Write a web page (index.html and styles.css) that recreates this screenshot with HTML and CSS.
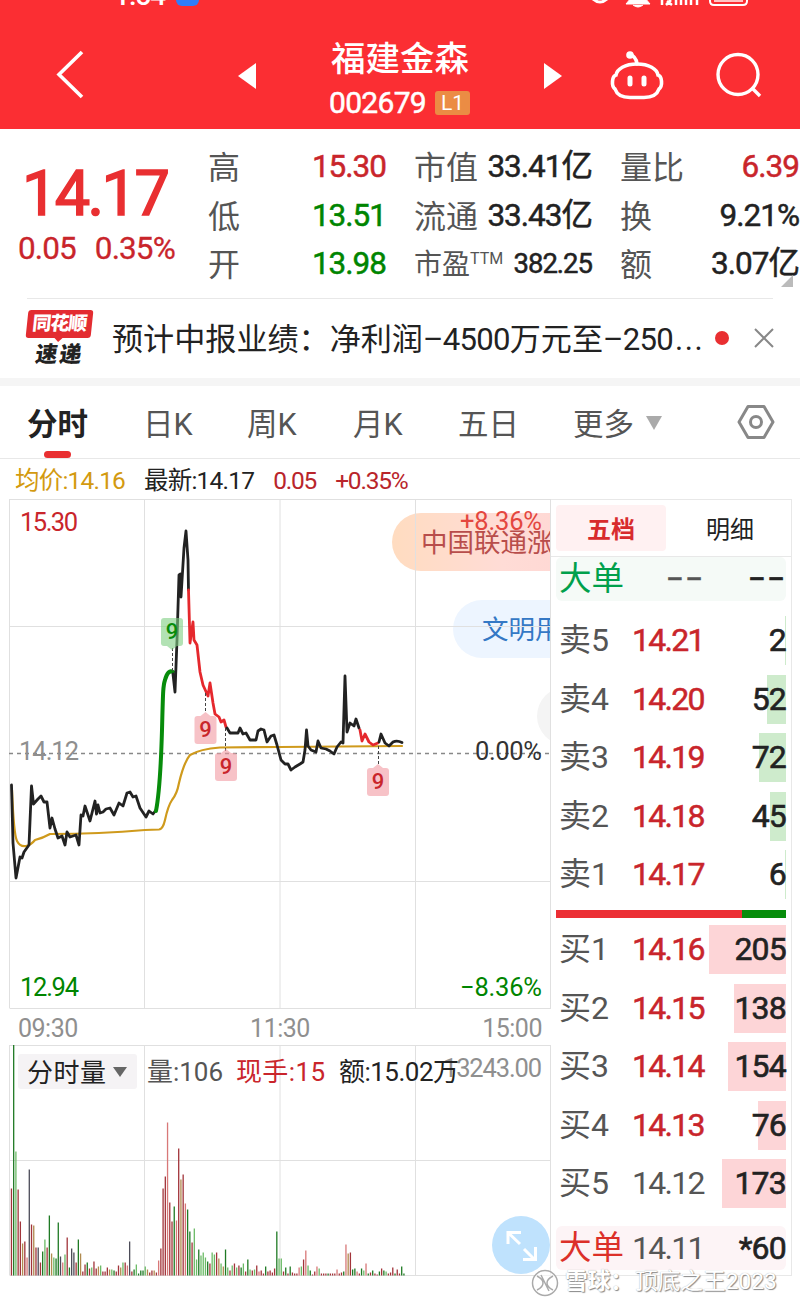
FILE: index.html
```
<!DOCTYPE html>
<html lang="zh-CN">
<head>
    <meta charset="UTF-8">
    <meta name="viewport" content="width=device-width, initial-scale=1.0">
    <title>福建金森 002679</title>
    <link rel="stylesheet" href="styles.css">
</head>
<body>

<header class="header">
    <div class="status-bar">
        <span class="status-time">1:54</span>
        <span class="status-app"></span>
        <svg class="status-icons" width="160" height="8" viewBox="590 0 160 8" fill="none" stroke="#fff" stroke-width="2">
            <path d="M591-3Q600 7 609-3" stroke-width="3"/>
            <path d="M626 4h24l-5-6h-14zM633 5q5 4 10 0" fill="#fff" stroke-width="1"/>
            <path d="M662 0v5M667 1l5 4M671 0l-5 5M676 0v5M681 0v5M686 0v5M691 0v5M697 0v5" stroke-width="2.5"/>
            <path d="M710-4v5q0 4 4 4h29q4 0 4-4v-5"/>
            <path d="M714 0h29" stroke="#ffc4c4" stroke-width="4"/>
        </svg>
    </div>
    <div class="title-bar">
        <svg class="back" width="30" height="50" viewBox="0 0 30 50" fill="none" stroke="#fff" stroke-width="3.6"><path d="M26 3L3 25.500L26 48"/></svg>
        <svg class="prev" width="19" height="26" viewBox="0 0 19 26"><path d="M0 13L18 0V26Z" fill="#fff"/></svg>
        <div class="stock">
            <h1>福建金森</h1>
            <div class="stock-code"><span>002679</span><em>L1</em></div>
        </div>
        <svg class="next" width="19" height="26" viewBox="0 0 19 26"><path d="M18 13L0 0V26Z" fill="#fff"/></svg>
        <svg class="robot" width="54" height="50" viewBox="0 0 54 50" fill="none" stroke="#fff" stroke-width="3.600" stroke-linecap="round">
            <path d="M27 13Q26 5 20 4"/>
            <circle cx="20" cy="4" r="2" fill="#fff"/>
            <path d="M27 13C15 13 7 18 6 24C2 25 1 35 5 38C7 44 13 46.500 20 46.500H34C41 46.500 47 44 49 38C53 35 52 25 48 24C47 18 39 13 27 13Z"/>
            <path d="M20 27v6M34 27v6" stroke-width="5"/>
        </svg>
        <svg class="search" width="48" height="48" viewBox="0 0 48 48" fill="none" stroke="#fff" stroke-width="3.400"><circle cx="23" cy="22.500" r="20"/><path d="M37 36L45 44"/></svg>
    </div>
</header>

<section class="quote">
    <div class="quote-price">
        <strong>14.17</strong>
        <div><span>0.05</span><span>0.35%</span></div>
    </div>
    <dl class="quote-col">
        <div><dt>高</dt><dd class="up">15.30</dd></div>
        <div><dt>低</dt><dd class="down">13.51</dd></div>
        <div><dt>开</dt><dd class="down">13.98</dd></div>
    </dl>
    <dl class="quote-col">
        <div><dt>市值</dt><dd>33.41亿</dd></div>
        <div><dt>流通</dt><dd>33.43亿</dd></div>
        <div class="pe"><dt>市盈<sup>TTM</sup></dt><dd>382.25</dd></div>
    </dl>
    <dl class="quote-col">
        <div><dt>量比</dt><dd class="up">6.39</dd></div>
        <div><dt>换</dt><dd>9.21%</dd></div>
        <div><dt>额</dt><dd>3.07亿</dd></div>
    </dl>
    <i class="expand-corner"></i>
</section>

<section class="news">
    <div class="news-logo">
        <b>同花顺</b>
        <i>速递</i>
    </div>
    <p>预计中报业绩：净利润<span>–4500</span>万元至<span>–250</span><span class="more">...</span></p>
    <span class="news-dot"></span>
    <svg width="20" height="20" viewBox="0 0 20 20" stroke="#888" stroke-width="2"><path d="M1 1L19 19M19 1L1 19"/></svg>
</section>

<nav class="tabs">
    <a class="active">分时</a>
    <a>日K</a>
    <a>周K</a>
    <a>月K</a>
    <a>五日</a>
    <a>更多<i class="caret"></i></a>
    <svg width="38" height="36" viewBox="0 0 38 36" fill="none" stroke="#888" stroke-width="3" stroke-linejoin="round"><path d="M11 2.500H27L36 18L27 33.500H11L2 18Z"/><circle cx="19" cy="18" r="5.500"/></svg>
</nav>

<div class="legend">
    <span class="avg">均价:14.16</span>
    <span>最新:14.17</span>
    <span class="chg">0.05</span>
    <span class="chg">+0.35%</span>
</div>

<main class="board">
    <div class="charts">
        <div class="bubbles">
            <span class="bubble hot">中国联通涨</span>
            <span class="bubble cool">文明用</span>
            <span class="bubble plain"></span>
        </div>

        <!-- intraday price -->
        <svg class="price-chart" width="551" height="511" viewBox="0 499 551 511">
            <path class="grid" d="M9.500 499.500H551M9.500 626.500H551M9.500 881.500H551M9.500 1008.500H551M9.500 499V1008M144.500 499V1008M280 499V1008M415.500 499V1008M550.500 499V1008"/>
            <path d="M9 753.500H551" stroke="#888" stroke-width="1.500" stroke-dasharray="4 4"/>
            <g class="axis">
                <text x="20" y="531" textLength="58" fill="#c9252b">15.30</text>
                <text x="19" y="760" textLength="60" fill="#8f8f8f">14.12</text>
                <text x="20" y="996" textLength="59" fill="#008500">12.94</text>
                <text x="460" y="530" textLength="82" fill="#e4473f">+8.36%</text>
                <text x="475" y="760" textLength="67" fill="#333">0.00%</text>
                <text x="460" y="996" textLength="82" fill="#008500">−8.36%</text>
            </g>
            <path class="line avg-line" stroke="#cf9a1c" d="M12 790C13 815 14 835 17 841Q20 847 26 846Q31 845 35 840Q43 838 50 834Q100 834 145 830L159 829.500Q163 829 165 820Q168 806 172 800Q177 794 179 783Q184 762 190 755Q200 749 220 747.500L280 747L402 746"/>
            <g class="line">
                <path stroke="#222" d="M11.500 785L13 843L16 878L20 857L22 858L24 852L29 845L31.500 786L33.500 804L38 799L41 796L44 802L47 802L50 828L52 818L55 829L58 838L62 836L65 845L67 832L70 837L76 835L79 845L81 815L83 816L85 806L90 821L95 801L96.500 814L98 805L100 813L103 812L106 809L110 808L114 815L119 803L123 806L127 793L130 792L133 797L136 796L140 808L146 817L149 811L153 814L156 810"/>
                <path stroke="#078c0b" stroke-width="4" d="M156 811C160 790 161 765 162 730C163 692 163 686 165 680Q168 669 173 672"/>
                <path stroke="#222" d="M173 674L175 692L177 640L179 575L180.500 574L181 597L184 548L186 531L188 560L188.500 590"/>
                <path stroke="#e5282d" d="M188.500 590L190 643L193 622L194 640L197 645L200 672L203 685L208 696L210 683L213 703L215 714L219 717L221 722L224 720L226 727"/>
                <path stroke="#222" d="M227 728L230 733L238 733L240 728L243 734L246 733L250 740L256 740L258 731L261 729L264 730L267 742L271 736L274 735L277 745L281 760L285 764L288 764L291 770L295 767L300 764L303 762L305 750L306.500 730L308 746L311 750L316 752L318 741L321 748L326 749L330 751L334 754L337 747L341 742L343 743L345 676L347 732L350 723L354 726L356 719L359 728"/>
                <path stroke="#e5282d" d="M360 730L362 741L365 734L369 742L373 745L378 743"/>
                <path stroke="#222" d="M379 742L381 734L385 743L389 746L393 742Q397 740 402 742.500"/>
            </g>
            <path stroke="#444" stroke-dasharray="3 2" d="M172.500 648V672M205.500 693V713M225.500 728V752M378.500 746V765"/>
            <g id="flags"></g>
        </svg>

        <div class="times"><span>09:30</span><span>11:30</span><span>15:00</span></div>

        <!-- volume -->
        <svg class="volume-chart" width="551" height="231" viewBox="0 1045 551 231">
            <path class="grid" d="M9.500 1045.500H551M9.500 1160.500H551M9.500 1275.500H551M9.500 1045V1275M144.500 1045V1275M280 1045V1275M415.500 1045V1275M550.500 1045V1275"/>
            <g id="bars"></g>
            <rect x="18" y="1054" width="119" height="35" rx="3" fill="#f5f3f5"/>
            <path d="M113 1067H127L120 1077Z" fill="#666"/>
            <g class="vol-text">
                <text x="443" y="1077" textLength="99" class="axis" fill="#8f8f8f">13243.00</text>
                <text x="27" y="1082" textLength="79" fill="#222">分时量</text>
                <text x="147" y="1081" textLength="76" fill="#555">量:106</text>
                <text x="236" y="1081" textLength="89" fill="#c9252b">现手:15</text>
                <text x="339" y="1081" textLength="120" fill="#222">额:15.02万</text>
            </g>
        </svg>
        <button class="fullscreen">
            <svg width="58" height="58" viewBox="0 0 58 58" fill="none" stroke="#fff" stroke-width="3"><path d="M16 28V16.500H29M16 16.500L28 28M32 33L43 44M31 43.500H43.500V31"/></svg>
        </button>
    </div>

    <aside class="book">
        <div class="book-tabs"><a class="active">五档</a><a>明细</a></div>
        <div class="big sell"><span>大单</span><span class="dash">−−</span><b class="dash">−−</b></div>
        <div class="levels" id="asks"></div>
        <div class="ratio"><i></i></div>
        <div class="levels" id="bids"></div>
        <div class="big buy"><span>大单</span><span class="price">14.11</span><b>*60</b></div>
    </aside>
</main>

<div class="watermark">
    <svg width="28" height="28" viewBox="0 0 28 28" fill="none" stroke="#aaa" stroke-width="1.500"><circle cx="14" cy="14" r="12.500" fill="#fff" fill-opacity=".6"/><path d="M6 7Q12 10 12 14Q12 18 6 21M22 7Q16 10 16 14Q16 18 22 21M10 6L18 22"/></svg>
    <b>雪球：</b><span>顶底之王2023</span>
</div>

<script>
    const SVG_NS = 'http://www.w3.org/2000/svg';

    function add(parent, tag, attrs, text) {
        const el = document.createElementNS(SVG_NS, tag);
        for (const key in attrs) el.setAttribute(key, attrs[key]);
        if (text) el.textContent = text;
        parent.appendChild(el);
    }

    // Turn markers: x, top, pointing down (green) or up (red)
    const flags = document.getElementById('flags');
    [[161, 618, 'g'], [194.5, 716, 'r'], [215, 753, 'r'], [367, 768, 'r']].forEach(([x, y, dir]) => {
        const tip = dir === 'g' ? `M${x + 6} ${y + 28}l5 4l5-4z` : `M${x + 6} ${y}l5-4l5 4z`;
        const fill = dir === 'g' ? '#7fce82' : '#f29aa2';
        add(flags, 'path', { d: tip, fill: fill, 'fill-opacity': .6 });
        add(flags, 'rect', { x: x, y: y, width: 22, height: 28, rx: 3, fill: fill, 'fill-opacity': .6 });
        add(flags, 'text', { x: x + 11, y: y + 21, class: 'flag-text', fill: dir === 'g' ? '#078c0b' : '#c9252b' }, '9');
    });

    // Volume per minute pair, colour letter + bar height
    const volume = `r87 g231 G124 r86 r54 o32 r34 p18 k106 r51 o50 r28 k28 r13 g24 G36 r28 g60 o22 G18 g17 g53
        k19 p13 G21 r38 g8 k27 k23 r13 g36 o22 r4 r11 g13 r7 G8 r14 r7 o9 G10 r4 r4 r8 o6 G6 g5 r4 r10 o8 G13 r13
        p10 k34 r4 g6 G11 g2 g5 g5 G9 o6 r3 r5 o5 r3 p15 r27 r87 r99 p153 r73 r54 g69 p55 r127 o96 r101 p72 g66
        g44 r33 G47 G16 g26 G20 G23 G18 g14 r12 G23 G21 r23 o17 G12 o9 g26 G8 r5 G10 r12 G8 r10 g8 G12 r4 g16
        G6 r5 G6 r10 p4 r5 r2 g9 r4 r5 r3 r7 g44 G17 G17 r4 g8 r2 g9 r3 r2 r2 p8 G9 r16 p25 G10 g5 r1 r4 p9 G7
        r2 r2 r2 g2 r2 r2 r2 p6 r2 r3 g4 p31 o22 r23 g6 g7 p4 r2 g7 G5 p12 g2 r3 g5 r2 r1 g4 r7 g5 G4 r2 r3
        r8 g2 r6 r2 g9 g2`.trim().split(/\s+/);
    const tones = { r: '#a2343a', p: '#d87878', g: '#1f7a24', G: '#6bbb66', o: '#b08a4e', k: '#4c4c58' };
    const bars = document.getElementById('bars');
    volume.forEach((v, i) => {
        const h = Number(v.slice(1));
        add(bars, 'rect', { x: 10.8 + i * 2.23, y: 1275.5 - h, width: 1.3, height: h, fill: tones[v[0]] });
    });

    // Order book: name, price, lots, bar width
    function fillLevels(id, rows) {
        document.getElementById(id).innerHTML = rows.map(([name, price, lots, width]) => `
            <div class="level">
                <span>${name}</span><span class="price">${price}</span>
                <b>${lots}</b><i style="width:${width}px"></i>
            </div>`).join('');
    }
    fillLevels('asks', [
        ['卖5', '14.21', 2, 1], ['卖4', '14.20', 52, 19], ['卖3', '14.19', 72, 27],
        ['卖2', '14.18', 45, 16], ['卖1', '14.17', 6, 1]
    ]);
    fillLevels('bids', [
        ['买1', '14.16', 205, 77], ['买2', '14.15', 138, 52], ['买3', '14.14', 154, 58],
        ['买4', '14.13', 76, 28], ['买5', '14.12', 173, 64]
    ]);
</script>

</body>
</html>
```
FILE: styles.css
```
* {
    margin: 0;
    padding: 0;
    box-sizing: border-box;
}

body {
    width: 800px;
    height: 1307px;
    overflow: hidden;
    position: relative;
    font-family: Roboto, "Noto Sans CJK SC", sans-serif;
    background: #fff;
    color: #222;
}

svg {
    display: block;
    flex: none;
}

i, em {
    font-style: normal;
}

/* Header */
.header {
    height: 129px;
    background: #fb2e33;
    color: #fff;
    overflow: hidden;
}

.status-bar {
    height: 8px;
    display: flex;
    align-items: flex-end;
    padding-left: 114px;
    overflow: hidden;
}

.status-time {
    width: 62px;
    font-size: 28px;
    font-weight: 500;
    line-height: 24px;
    letter-spacing: -1px;
}

.status-app {
    width: 23px;
    height: 30px;
    margin-bottom: 2px;
    border-radius: 6px;
    background: #2f7dfb;
}

.status-icons {
    margin-left: 391px;
}

.title-bar {
    height: 121px;
    display: flex;
    align-items: center;
    padding: 14px 0 0 56px;
}

.back {
    margin-top: -4px;
}

.prev {
    margin-left: 152px;
}

.stock {
    width: 143px;
    margin: 6px 0 0 71px;
}

.stock h1 {
    font-size: 34.5px;
    line-height: 44px;
    font-weight: 500;
    padding-left: 3px;
}

.stock-code {
    display: flex;
    align-items: center;
    height: 40px;
    padding-top: 4px;
    gap: 8px;
    padding-left: 1px;
}

.stock-code span {
    width: 98px;
    font-size: 30px;
    letter-spacing: -.7px;
    -webkit-text-stroke: .5px;
}

.stock-code em {
    width: 35px;
    height: 24px;
    border-radius: 3px;
    background: #eb8c44;
    font-size: 21px;
    line-height: 25px;
    text-align: center;
}

.next {
    margin-left: 73px;
}

.robot {
    margin-left: 47px;
}

.search {
    margin-left: 51px;
}

/* Quote summary */
.quote {
    position: relative;
    height: 169px;
    display: flex;
    padding-top: 14px;
}

.quote-price {
    width: 208px;
    padding-top: 16px;
    color: #c9252b;
}

.quote-price strong {
    display: block;
    padding-left: 22px;
    font-size: 63px;
    line-height: 70px;
    font-weight: 400;
    letter-spacing: -2.6px;
    color: #e92f31;
    -webkit-text-stroke: 1.6px;
}

.quote-price div {
    display: flex;
    gap: 19px;
    padding: 0 0 0 18px;
    font-size: 31.5px;
    line-height: 40px;
    letter-spacing: -.9px;
    -webkit-text-stroke: .3px;
}

.quote-col {
    width: 178px;
    margin-right: 28px;
}

.quote-col:last-of-type {
    width: 179px;
    margin: 0;
}

.quote-col div {
    display: flex;
    justify-content: space-between;
    align-items: center;
    height: 48.5px;
    white-space: nowrap;
}

.quote-col dt {
    margin-top: -4px;
    font-size: 32px;
    color: #555;
}

.quote-col dd {
    font-size: 31.5px;
    line-height: 36px;
    letter-spacing: -1px;
    -webkit-text-stroke: .5px;
}

.quote-col .pe dt {
    font-size: 28px;
}

.quote-col .pe dd {
    font-size: 27.5px;
}

.pe sup {
    font-size: 16px;
    line-height: 0;
    vertical-align: 10px;
}

.up {
    color: #c9252b;
}

.down {
    color: #008500;
}

.expand-corner {
    position: absolute;
    right: 7px;
    bottom: 11px;
    border-left: 12px solid transparent;
    border-bottom: 12px solid #bbb;
}

/* News strip */
.news {
    height: 88px;
    display: flex;
    align-items: center;
    position: relative;
    padding: 0 26px 0 27px;
    border-bottom: 8px solid #f5f5f5;
}

.news::before {
    content: "";
    position: absolute;
    left: 27px;
    right: 27px;
    top: 0;
    height: 1px;
    background: #e8e8e8;
}

.news-logo {
    width: 65px;
    height: 56px;
    margin-right: 20px;
    text-align: center;
    font-weight: 900;
}

.news-logo b {
    display: block;
    height: 28px;
    font-size: 19px;
    line-height: 27px;
    letter-spacing: -1px;
    font-weight: 900;
    color: #fff;
    background: #e32c31;
    border-radius: 3px;
    transform: skewX(-6deg);
}

.news-logo b::after {
    content: "";
    position: absolute;
    left: 28px;
    top: 27px;
    border: 5px solid transparent;
    border-top-color: #e32c31;
}

.news-logo i {
    display: block;
    font-size: 22px;
    line-height: 33px;
    letter-spacing: 2px;
    transform: skewX(-8deg);
}

.news p {
    width: 592px;
    padding-top: 4px;
    font-size: 31.1px;
    line-height: 40px;
    white-space: nowrap;
}

.news p span {
    letter-spacing: -.7px;
}

.news p .more {
    letter-spacing: 1.5px;
    padding-left: 2px;
}

.news-dot {
    width: 14px;
    height: 14px;
    margin: 0 25px 0 11px;
    border-radius: 50%;
    background: #e92f31;
    flex: none;
}

/* Period tabs */
.tabs {
    height: 73px;
    display: grid;
    grid-template-columns: 116px 104px 106px 105px 115px 164px 38px;
    align-items: center;
    padding-left: 27px;
    border-bottom: 1px solid #e8e8e8;
    font-size: 30.5px;
    color: #555;
}

.tabs a {
    position: relative;
    line-height: 77px;
    height: 72px;
}

.tabs .active {
    color: #222;
    font-weight: 700;
}

.tabs .active::after {
    content: "";
    position: absolute;
    left: 17px;
    bottom: 0;
    width: 27px;
    height: 7px;
    border-radius: 4px;
    background: #e92f31;
}

.caret {
    display: inline-block;
    margin-left: 12px;
    vertical-align: 5px;
    border: 8.5px solid transparent;
    border-top: 14px solid #aaa;
    border-bottom: 0;
}

.legend {
    height: 40px;
    display: flex;
    gap: 19px;
    padding-left: 15px;
    font-size: 24.5px;
    line-height: 43px;
    letter-spacing: -.8px;
}

.legend .avg {
    color: #d39a10;
}

.legend .chg {
    color: #b9252b;
    letter-spacing: -1.2px;
}

/* Charts */
.board {
    display: flex;
    height: 777px;
}

.charts {
    position: relative;
    width: 551px;
}

.grid {
    fill: none;
    stroke: #e0e0e0;
}

.price-chart {
    position: relative;
}

.line {
    fill: none;
    stroke-width: 2.8;
    stroke-linejoin: round;
    stroke-linecap: round;
}

.avg-line {
    stroke-width: 2.2;
}

.axis {
    font-size: 25.5px;
    -webkit-text-stroke: .3px;
}

.vol-text {
    font-size: 26px;
}

.flag-text {
    font-size: 22px;
    font-weight: 500;
    text-anchor: middle;
}

.bubbles {
    position: absolute;
    inset: 0;
    overflow: hidden;
}

.bubble {
    position: absolute;
    height: 58px;
    border-radius: 29px;
    padding-left: 29px;
    font-size: 26.5px;
    line-height: 60px;
    white-space: nowrap;
}

.bubble.hot {
    left: 392px;
    top: 14px;
    width: 220px;
    background: linear-gradient(90deg, #ffdcc0, #ffdcd6 50%, #ffd5d3);
    color: #b84e4b;
}

.bubble.cool {
    left: 453px;
    top: 101px;
    width: 180px;
    background: #edf5ff;
    color: #3478c5;
}

.bubble.plain {
    left: 537px;
    top: 188px;
    width: 100px;
    background: #f4f4f4;
}

.times {
    display: flex;
    justify-content: space-between;
    height: 35px;
    padding: 0 9px 0 18px;
    font-size: 25px;
    line-height: 37px;
    letter-spacing: -.5px;
    color: #8f8f8f;
}

.fullscreen {
    position: absolute;
    left: 492px;
    top: 717px;
    width: 58px;
    height: 58px;
    border: none;
    border-radius: 50%;
    background: #bfe2fd;
}

/* Order book */
.book {
    width: 241px;
    padding: 0 5px;
    border: 1px solid #e8e8e8;
    border-left: none;
}

.book-tabs {
    display: flex;
    height: 57px;
    margin: 0 -5px;
    padding: 5px;
    border-bottom: 1px solid #e8e8e8;
    font-size: 24px;
    line-height: 50px;
    text-align: center;
}

.book-tabs a {
    flex: 1;
    padding-left: 8px;
}

.book-tabs .active {
    flex: none;
    width: 110px;
    padding: 0;
    border-radius: 4px;
    background: #fff1f2;
    color: #d82b2d;
    font-weight: 700;
}

.level,
.big {
    display: grid;
    grid-template-columns: 73px 80px 1fr;
    align-items: center;
    position: relative;
    height: 49px;
    padding-left: 3px;
    font-size: 32px;
    line-height: 47px;
    color: #555;
}

.levels {
    display: grid;
    row-gap: 9.5px;
}

.level b,
.big b {
    position: relative;
    z-index: 1;
    color: #222;
    font-weight: 400;
    letter-spacing: -.8px;
    text-align: right;
    -webkit-text-stroke: .6px;
}

.level i {
    position: absolute;
    right: 0;
    top: 0;
    height: 49px;
}

.price {
    letter-spacing: -1.7px;
}

.level .price {
    color: #c9252b;
    -webkit-text-stroke: .5px;
}

#bids .level:last-child .price {
    color: #555;
    -webkit-text-stroke: 0;
}

#asks i {
    background: #ceebcc;
}

#bids i {
    background: #fdd5d7;
}

.big {
    height: 44px;
    border-radius: 6px;
    line-height: 44px;
}

.big > :first-child {
    font-size: 32.5px;
}

.big .dash {
    letter-spacing: 1px;
    text-align: right;
}

.big.sell {
    margin-bottom: 15px;
    background: #f5faf7;
}

.sell > :first-child {
    color: #00a04c;
}

.sell span.dash {
    padding-right: 8px;
    -webkit-text-stroke: .5px;
}

.big.buy {
    margin-top: 18px;
    background: #fdf4f6;
}

.buy > :first-child {
    color: #dc3029;
}

.ratio {
    height: 8px;
    margin: 11px 0 7px;
    background: #078c0b;
}

.ratio i {
    display: block;
    width: 186px;
    height: 8px;
    background: #ec2f35;
}

.watermark {
    position: absolute;
    left: 531px;
    top: 1266px;
    display: flex;
    align-items: center;
    height: 32px;
    font-size: 22.7px;
    line-height: 30px;
    color: #fff;
    text-shadow: 1px 1px 1px #888, 0 0 1px #aaa;
    white-space: nowrap;
}

.watermark svg {
    margin-top: 2px;
}

.watermark b {
    margin-left: 6px;
    width: 70px;
}
```
